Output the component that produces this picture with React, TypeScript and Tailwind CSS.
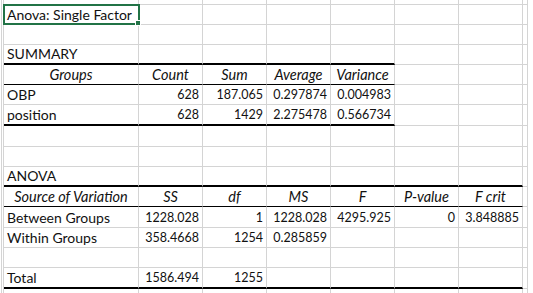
import React from "react";

type Cell = { t?: string; a?: "l" | "r" | "c"; i?: boolean };
type Row = { h: string; cells: Cell[]; b?: "thick" | "thin"; span?: number };

const colW = ["w-[135px]", "w-[64px]", "w-[64px]", "w-[64px]", "w-[64px]", "w-[64px]", "w-[64px]", "w-[5px]"];

const L = (t: string): Cell => ({ t, a: "l" });
const R = (t: string): Cell => ({ t, a: "r" });
const H = (t: string): Cell => ({ t, a: "c", i: true });

const rows: Row[] = [
  { h: "h-[5px]", cells: [] },
  { h: "h-[20px]", cells: [L("Anova: Single Factor")] },
  { h: "h-[20px]", cells: [] },
  { h: "h-[20px]", cells: [L("SUMMARY")], b: "thick", span: 5 },
  { h: "h-[20px]", cells: [H("Groups"), H("Count"), H("Sum"), H("Average"), H("Variance")], b: "thin", span: 5 },
  { h: "h-[20px]", cells: [L("OBP"), R("628"), R("187.065"), R("0.297874"), R("0.004983")] },
  { h: "h-[21px]", cells: [L("position"), R("628"), R("1429"), R("2.275478"), R("0.566734")], b: "thick", span: 5 },
  { h: "h-[21px]", cells: [] },
  { h: "h-[20px]", cells: [] },
  { h: "h-[20px]", cells: [L("ANOVA")], b: "thick", span: 7 },
  {
    h: "h-[20px]",
    cells: [H("Source of Variation"), H("SS"), H("df"), H("MS"), H("F"), H("P-value"), H("F crit")],
    b: "thin",
    span: 7,
  },
  {
    h: "h-[21px]",
    cells: [L("Between Groups"), R("1228.028"), R("1"), R("1228.028"), R("4295.925"), R("0"), R("3.848885")],
  },
  { h: "h-[20px]", cells: [L("Within Groups"), R("358.4668"), R("1254"), R("0.285859")] },
  { h: "h-[20px]", cells: [] },
  { h: "h-[21px]", cells: [L("Total"), R("1586.494"), R("1255")], b: "thick", span: 7 },
  { h: "h-[10px]", cells: [] },
];

export default function App() {
  return (
    <div
      className="relative w-[533px] h-[293px] overflow-hidden bg-white text-[#111] text-[14px]"
      style={{ fontFamily: "Lato, 'Open Sans', sans-serif" }}
    >
      <div className="flex">
        <div className="ml-[1px] w-[2px] h-[293px] border-l border-[#d4d4d4]" />
        <div className="flex flex-col border-l border-[#d4d4d4]">
          {rows.map((row, ri) => (
            <div key={ri} className={`flex ${row.h}`}>
              {colW.map((w, ci) => {
                const c = row.cells[ci];
                const inSpan = row.span !== undefined && ci < row.span;
                const bottom =
                  inSpan && row.b === "thick"
                    ? "border-b-2 border-b-black"
                    : inSpan && row.b === "thin"
                    ? "border-b border-b-black"
                    : "border-b border-b-[#d4d4d4]";
                const align =
                  c?.a === "r"
                    ? "justify-end pr-[3px] text-[12.5px]"
                    : c?.a === "c"
                    ? "justify-center text-[14.5px]"
                    : "justify-start pl-[3px]";
                return (
                  <div
                    key={ci}
                    className={`flex items-end shrink-0 overflow-hidden whitespace-nowrap border-r border-r-[#d4d4d4] pb-[2px] leading-[14px] ${w} ${bottom} ${align}`}
                  >
                    {c?.t && <span className={c.i ? "italic" : ""}>{c.t}</span>}
                  </div>
                );
              })}
            </div>
          ))}
        </div>
      </div>
      <div className="absolute left-[3px] top-[4px] w-[137px] h-[21px] border-2 border-[#217346]" />
      <div className="absolute left-[135px] top-[20px] w-[6px] h-[6px] bg-[#217346] border border-white" />
    </div>
  );
}
